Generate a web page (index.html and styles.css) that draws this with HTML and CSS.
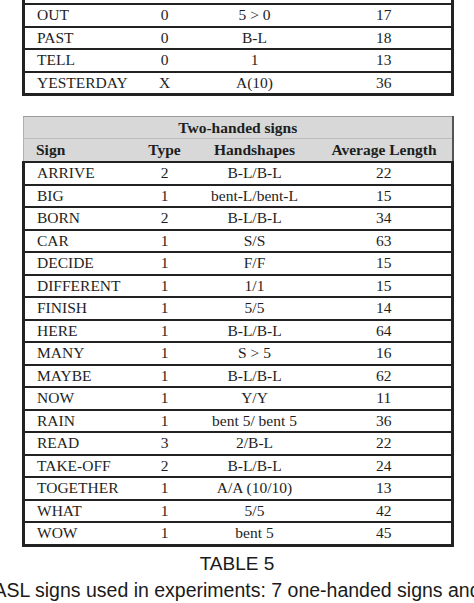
FILE: index.html
```html
<!DOCTYPE html>
<html>
<head>
<meta charset="utf-8">
<link rel="stylesheet" href="styles.css">
</head>
<body>
<div class="page">
  <table class="t t1">
    <colgroup><col class="c1"><col class="c2"><col class="c3"><col class="c4"></colgroup>
    <tbody>
      <tr class="stub"><td></td><td></td><td></td><td></td></tr>
      <tr><td>OUT</td><td>0</td><td>5 &gt; 0</td><td>17</td></tr>
      <tr><td>PAST</td><td>0</td><td>B-L</td><td>18</td></tr>
      <tr><td>TELL</td><td>0</td><td>1</td><td>13</td></tr>
      <tr><td>YESTERDAY</td><td>X</td><td>A(10)</td><td>36</td></tr>
    </tbody>
  </table>

  <table class="t t2">
    <colgroup><col class="c1"><col class="c2"><col class="c3"><col class="c4"></colgroup>
    <thead>
      <tr class="h1"><th colspan="4">Two-handed signs</th></tr>
      <tr class="h2"><th>Sign</th><th>Type</th><th>Handshapes</th><th>Average Length</th></tr>
    </thead>
    <tbody>
      <tr><td>ARRIVE</td><td>2</td><td>B-L/B-L</td><td>22</td></tr>
      <tr><td>BIG</td><td>1</td><td>bent-L/bent-L</td><td>15</td></tr>
      <tr><td>BORN</td><td>2</td><td>B-L/B-L</td><td>34</td></tr>
      <tr><td>CAR</td><td>1</td><td>S/S</td><td>63</td></tr>
      <tr><td>DECIDE</td><td>1</td><td>F/F</td><td>15</td></tr>
      <tr><td>DIFFERENT</td><td>1</td><td>1/1</td><td>15</td></tr>
      <tr><td>FINISH</td><td>1</td><td>5/5</td><td>14</td></tr>
      <tr><td>HERE</td><td>1</td><td>B-L/B-L</td><td>64</td></tr>
      <tr><td>MANY</td><td>1</td><td>S &gt; 5</td><td>16</td></tr>
      <tr><td>MAYBE</td><td>1</td><td>B-L/B-L</td><td>62</td></tr>
      <tr><td>NOW</td><td>1</td><td>Y/Y</td><td>11</td></tr>
      <tr><td>RAIN</td><td>1</td><td>bent 5/ bent 5</td><td>36</td></tr>
      <tr><td>READ</td><td>3</td><td>2/B-L</td><td>22</td></tr>
      <tr><td>TAKE-OFF</td><td>2</td><td>B-L/B-L</td><td>24</td></tr>
      <tr><td>TOGETHER</td><td>1</td><td>A/A (10/10)</td><td>13</td></tr>
      <tr><td>WHAT</td><td>1</td><td>5/5</td><td>42</td></tr>
      <tr><td>WOW</td><td>1</td><td>bent 5</td><td>45</td></tr>
    </tbody>
  </table>

  <div class="cap1">TABLE 5</div>
  <div class="cap2"><span>ASL signs used in experiments: 7 one-handed signs and</span></div>
</div>
</body>
</html>
```

FILE: styles.css
```css
html, body {
  margin: 0;
  padding: 0;
  background: #ffffff;
}

.page {
  width: 474px;
  height: 603px;
  overflow: hidden;
}

.t {
  border-collapse: collapse;
  table-layout: fixed;
  width: 429px;
  margin-left: 22px;
  font-family: "Liberation Serif", "Times New Roman", serif;
  font-size: 15.5px;
  color: #1e1e1e;
}

.c1 { width: 113px; }
.c2 { width: 56px; }
.c3 { width: 124px; }
.c4 { width: 136px; }

.t td {
  padding: 0;
  height: 20.5px;
  text-align: center;
  vertical-align: middle;
  line-height: 18px;
  border-bottom: 2px solid #222;
  white-space: nowrap;
}

.t td:first-child {
  text-align: left;
  padding-left: 12px;
  border-left: 3px solid #222;
}

.t td:last-child {
  border-right: 3px solid #222;
}

.t tbody tr:last-child td {
  border-bottom: 3px solid #222;
}

.t1 .stub td {
  height: 3px;
  line-height: 0;
}

.t2 {
  margin-top: 20px;
}

.t2 th {
  background: #d8d8d8;
  font-weight: bold;
  padding: 0;
  line-height: 18px;
  white-space: nowrap;
}

.t2 .h1 th {
  height: 21px;
  border-top: 1px solid #9c9c9c;
  border-left: 1px solid #b0b0b0;
  border-right: 2px solid #555;
  border-bottom: 1px solid #bdbdbd;
}

.t2 .h2 th {
  height: 22px;
  text-align: center;
  border-bottom: 2px solid #222;
}

.t2 .h2 th:first-child {
  text-align: left;
  padding-left: 12px;
  border-left: 1px solid #b0b0b0;
}

.t2 .h2 th:last-child {
  border-right: 2px solid #555;
}

.cap1 {
  font-family: "Liberation Sans", Arial, sans-serif;
  font-size: 19px;
  color: #1a1a1a;
  text-align: center;
  margin-top: 6px;
  line-height: 22px;
}

.cap2 {
  display: flex;
  justify-content: center;
  white-space: nowrap;
  font-family: "Liberation Sans", Arial, sans-serif;
  font-size: 19.5px;
  color: #1a1a1a;
  line-height: 24px;
  margin-top: 3px;
}
```
